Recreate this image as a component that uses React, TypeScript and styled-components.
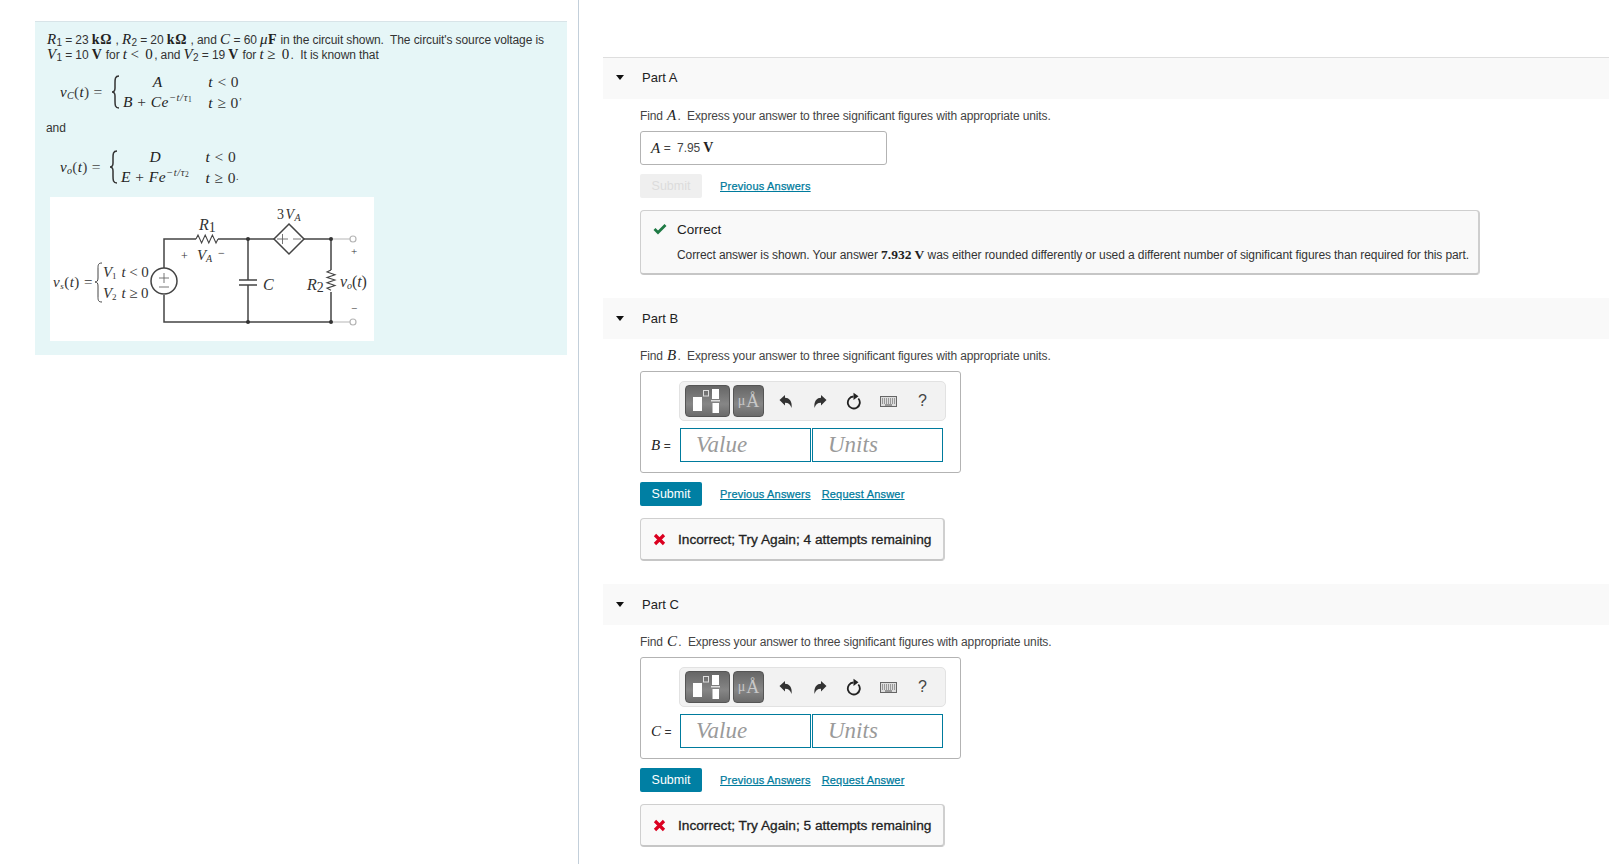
import styled, { createGlobalStyle } from 'styled-components';

const GlobalStyle = createGlobalStyle`
  html, body {
    margin: 0;
    padding: 0;
    background: #fff;
    overflow: hidden;
  }
  body {
    font-family: "Liberation Sans", Arial, sans-serif;
    font-size: 12px;
    letter-spacing: -0.1px;
    color: #333;
  }
`;

const Page = styled.div`
  display: flex;
  width: 1609px;
  height: 864px;
  overflow: hidden;
`;

const LeftColumn = styled.div`
  width: 579px;
  height: 864px;
  flex-shrink: 0;
  box-sizing: border-box;
  border-right: 1px solid #c3cfda;
  padding: 21px 0 0 35px;
`;

const RightColumn = styled.div`
  flex: 1;
  padding: 57px 0 0 24px;
`;

const Statement = styled.div`
  width: 532px;
  height: 334px;
  box-sizing: border-box;
  background: #e6f6f7;
  border-top: 1px solid #d8e4e8;
  padding: 10px 12px 0 12px;
  line-height: 14.5px;
`;

const Paragraph = styled.div`
  height: 14.5px;
  white-space: pre;
`;

const M = styled.span`
  font-family: "Liberation Serif", "DejaVu Serif", serif;
  font-style: italic;
  font-size: 15px;
  letter-spacing: 0.3px;
  color: #222;
`;

const Mn = styled(M)`
  font-style: normal;
  letter-spacing: 1.3px;
`;

const Mr = styled(M)`
  font-style: normal;
  font-weight: 700;
  font-size: 14px;
  letter-spacing: 0.8px;
`;

const NoteMath = styled(Mr)`
  font-size: 13.5px;
  letter-spacing: 0;
`;

const Sub = styled.sub`
  font-size: 10px;
  line-height: 0;
  vertical-align: -2px;
`;

const SubMath = styled(M)`
  font-size: 10px;
`;

const Equation = styled.div<{ $top: number; $left: number }>`
  display: flex;
  align-items: center;
  margin: ${({ $top }) => $top}px 0 0 ${({ $left }) => $left}px;
  height: 44px;
`;

const EqLabel = styled.div<{ $width: number }>`
  font-family: "Liberation Serif", serif;
  font-size: 15.5px;
  letter-spacing: 0.3px;
  color: #444;
  white-space: pre;
  width: ${({ $width }) => $width}px;
`;

const Cases = styled.div`
  display: grid;
  grid-template-columns: auto auto;
  grid-auto-rows: 20.5px;
  column-gap: 16px;
  margin-left: 3px;
  font-family: "Liberation Serif", serif;
  font-size: 15.5px;
  letter-spacing: 0.4px;
  line-height: 20.5px;
  color: #333;

  ${M} {
    font-size: 15.5px;
    letter-spacing: 0.5px;
  }
`;

const CaseValue = styled.div`
  text-align: center;
  white-space: pre;
`;

const CaseCond = styled.div`
  white-space: pre;
`;

const Sup = styled.sup`
  font-size: 10.5px;
  line-height: 0;
  vertical-align: 6px;
  font-style: italic;
  letter-spacing: 0.6px;

  sub {
    font-size: 7.5px;
    font-style: normal;
    line-height: 0;
    vertical-align: -1px;
  }
`;

const Dot = styled.span`
  font-size: 10px;
  vertical-align: 3px;
`;

const AndLine = styled.div`
  margin-top: 7px;
  line-height: 14px;
  margin-left: -1px;
`;

const CircuitFrame = styled.div`
  width: 324px;
  height: 144px;
  margin: 8px 0 0 3px;
  background: #fff;
`;

const PartHeader = styled.div<{ $first?: boolean }>`
  display: flex;
  align-items: center;
  box-sizing: border-box;
  height: ${({ $first }) => ($first ? 42 : 41)}px;
  padding-bottom: ${({ $first }) => ($first ? 2 : 0)}px;
  background: #f9f9f9;
  border-top: ${({ $first }) => ($first ? '1px solid #dedede' : 'none')};
  color: #222;
  font-size: 13px;
  letter-spacing: 0;
`;

const Caret = styled.span`
  width: 0;
  height: 0;
  margin: 0 18px 0 13px;
  border-left: 4.5px solid transparent;
  border-right: 4.5px solid transparent;
  border-top: 5px solid #111;
`;

const PartBody = styled.div`
  padding: 9px 0 23px 37px;
`;

const Prompt = styled.div`
  height: 14px;
  line-height: 14px;
  margin-bottom: 9px;
  color: #444;
  letter-spacing: -0.13px;
  white-space: pre;

  ${M} {
    margin: 0 1px;
  }
`;

const AnswerBox = styled.div`
  display: flex;
  align-items: center;
  width: 247px;
  height: 34px;
  box-sizing: border-box;
  border: 1px solid #b3b3b3;
  border-radius: 3px;
  padding-left: 10px;
  color: #444;
  white-space: pre;
`;

const Actions = styled.div<{ $top: number }>`
  display: flex;
  align-items: center;
  margin-top: ${({ $top }) => $top}px;
`;

const SubmitButton = styled.div<{ $disabled?: boolean }>`
  display: flex;
  align-items: center;
  justify-content: center;
  width: 62px;
  height: 24px;
  padding-bottom: 1px;
  box-sizing: border-box;
  border-radius: 2px;
  background: ${({ $disabled }) => ($disabled ? '#efefef' : '#007fa3')};
  color: ${({ $disabled }) => ($disabled ? '#dcdcdc' : '#fff')};
  font-size: 12.5px;
  letter-spacing: 0;
`;

const ActionLink = styled.a`
  margin-left: 18px;
  color: #007b9d;
  font-size: 11px;
  letter-spacing: 0.2px;
  text-decoration: underline;
  -webkit-text-stroke: 0.25px #007b9d;

  & + & {
    margin-left: 11px;
  }
`;

const Feedback = styled.div<{ $wide?: boolean }>`
  margin-top: 12px;
  box-sizing: border-box;
  width: ${({ $wide }) => ($wide ? 840 : 305)}px;
  height: ${({ $wide }) => ($wide ? 65 : 43)}px;
  border: 1px solid #cfcfcf;
  border-bottom: 2px solid #c6c6c6;
  border-right: 2px solid #cfcfcf;
  border-radius: 4px;
  background: #f9f9f9;
  padding-left: 12px;
`;

const FeedbackRow = styled.div<{ $height: number }>`
  display: flex;
  align-items: center;
  height: ${({ $height }) => $height}px;
  color: #222;
`;

const FeedbackTitle = styled.span<{ $strong?: boolean }>`
  margin-left: ${({ $strong }) => ($strong ? 12 : 10)}px;
  font-size: ${({ $strong }) => ($strong ? 13.7 : 13.5)}px;
  letter-spacing: 0;
  -webkit-text-stroke: ${({ $strong }) => ($strong ? '0.3px #222' : '0')};
`;

const FeedbackNote = styled.div`
  margin-left: 24px;
  color: #333;
  letter-spacing: -0.09px;
  white-space: pre;
`;

const EntryBox = styled.div`
  width: 321px;
  height: 102px;
  box-sizing: border-box;
  border: 1px solid #b3b3b3;
  border-radius: 3px;
  padding: 9px 0 0 38px;
`;

const Toolbar = styled.div`
  display: flex;
  align-items: center;
  width: 267px;
  height: 40px;
  box-sizing: border-box;
  border: 1px solid #e2e2e2;
  border-radius: 5px;
  background: #f2f2f2;
  padding-left: 5px;
`;

const ToolGroup = styled.div<{ $width: number; $gap: number }>`
  display: flex;
  align-items: center;
  justify-content: center;
  width: ${({ $width }) => $width}px;
  height: 32px;
  box-sizing: border-box;
  margin-right: ${({ $gap }) => $gap}px;
  border: 1px solid #555;
  border-radius: 4px;
  background: linear-gradient(#666, #868686 60%, #6b6b6b);
  color: #c8c8c8;
  font-family: "Liberation Serif", serif;
  font-size: 14px;
`;

const Angstrom = styled.span`
  font-size: 18px;
  line-height: 20px;
  margin-left: 1px;
`;

const ToolIcon = styled.span<{ $width: number }>`
  display: flex;
  align-items: center;
  justify-content: center;
  width: ${({ $width }) => $width}px;
  color: #444;
  font-size: 16px;
`;

const EntryRow = styled.div`
  display: flex;
  align-items: center;
  margin: 7px 0 0 -28px;
`;

const EntryLabel = styled.div`
  width: 29px;
  white-space: pre;
  color: #333;
`;

const EntryInput = styled.div`
  display: flex;
  align-items: center;
  width: 131px;
  height: 34px;
  box-sizing: border-box;
  margin-right: 1px;
  padding-left: 15px;
  border: 1px solid #007b9d;
  font-family: "Liberation Serif", serif;
  font-style: italic;
  font-size: 23px;
  letter-spacing: 0;
  color: #9a9a9a;
`;

const Brace = ({ height }: { height: number }) => (
  <svg width="9" height={height} viewBox={`0 0 9 ${height}`}>
    <path
      d={`M8 1 C4 1 4 4 4 8 L4 ${height / 2 - 4} C4 ${height / 2 - 1} 3 ${height / 2} 1 ${height / 2} C3 ${height / 2} 4 ${height / 2 + 1} 4 ${height / 2 + 4} L4 ${height - 8} C4 ${height - 4} 4 ${height - 1} 8 ${height - 1}`}
      fill="none"
      stroke="#333"
      strokeWidth="1.5"
    />
  </svg>
);

const Circuit = () => (
  <svg width="324" height="144" viewBox="0 0 324 144" fontFamily="Liberation Serif, serif" fill="#333">
    <g fill="none" stroke="#444" strokeWidth="1.5">
      <path d="M114 71 V42 H146 M168 42 H224 M254 42 H281 V73 M281 95 V125 H114 V98" />
      <path d="M146 42 l2 -4 l3.6 8 l3.6 -8 l3.6 8 l3.6 -8 l3.6 8 l2 -4" strokeWidth="1.1" />
      <path d="M281 73 l-4 2 l8 2.7 l-8 2.7 l8 2.7 l-8 2.7 l8 2.7 l-8 2.7 l4 2" strokeWidth="1.1" />
      <path d="M198 42 V83 M198 88 V125 M189 83 H207 M189 88 H207" />
      <path d="M239 27 L254 42 L239 57 L224 42 Z" />
      <circle cx="114" cy="84" r="13" />
    </g>
    <g fill="none" stroke="#b5b5b5" strokeWidth="1.2">
      <path d="M281 42 H300 M281 125 H300" />
      <circle cx="303" cy="42" r="3" />
      <circle cx="303" cy="125" r="3" />
    </g>
    <circle cx="198" cy="42" r="2" fill="#333" />
    <circle cx="198" cy="125" r="2" fill="#333" />
    <circle cx="281" cy="42" r="2" fill="#333" />
    <circle cx="281" cy="125" r="2" fill="#333" />
    <path d="M227 42 H238 M232.500 37 V47 M243 42 H251" stroke="#666" strokeWidth="0.9" fill="none" />
    <path d="M109 81 H119 M114 76 V86 M109 90 H119" stroke="#666" strokeWidth="0.9" fill="none" />
    <text x="149" y="33" fontSize="16" fontStyle="italic">R<tspan fontStyle="normal" fontSize="14" dy="2">1</tspan></text>
    <text x="131" y="63" fontSize="12">+</text>
    <text x="147" y="63" fontSize="15" fontStyle="italic">V<tspan fontSize="10" dy="2">A</tspan></text>
    <text x="168" y="60" fontSize="12">−</text>
    <text x="227" y="22" fontSize="14" letterSpacing="0.5">3<tspan fontStyle="italic" dx="1">V</tspan><tspan fontStyle="italic" fontSize="10" dy="2">A</tspan></text>
    <text x="213" y="93" fontSize="16" fontStyle="italic">C</text>
    <text x="257" y="93" fontSize="16" fontStyle="italic">R<tspan fontStyle="normal" fontSize="14" dy="2">2</tspan></text>
    <text x="290" y="90" fontSize="16" fontStyle="italic">v<tspan fontSize="10" dy="2">o</tspan><tspan fontStyle="normal" dy="-2">(</tspan>t<tspan fontStyle="normal">)</tspan></text>
    <text x="301" y="58" fontSize="11">+</text>
    <text x="301" y="115" fontSize="11">−</text>
    <text x="3" y="90" fontSize="15" fontStyle="italic" letterSpacing="0.5">v<tspan fontSize="9" dy="2">s</tspan><tspan fontStyle="normal" dy="-2">(</tspan>t<tspan fontStyle="normal">) =</tspan></text>
    <path d="M52 66 C48 66 48 68 48 72 V81 C48 84 47 85 45 85 C47 85 48 86 48 89 V99 C48 103 48 105 52 105" fill="none" stroke="#444" strokeWidth="1" />
    <text x="53" y="80" fontSize="15" fontStyle="italic">V<tspan fontStyle="normal" fontSize="9" dy="2">1</tspan><tspan dx="5" dy="-2">t</tspan><tspan fontStyle="normal"> &lt; 0</tspan></text>
    <text x="53" y="101" fontSize="15" fontStyle="italic">V<tspan fontStyle="normal" fontSize="9" dy="2">2</tspan><tspan dx="5" dy="-2">t</tspan><tspan fontStyle="normal"> ≥ 0</tspan></text>
  </svg>
);

const TemplateIcon = () => (
  <svg width="43" height="29" viewBox="0 0 43 29">
    <rect x="7" y="10" width="9" height="14" fill="#fff" />
    <rect x="17.500" y="3.500" width="5" height="5.500" fill="none" stroke="#ddd" strokeWidth="1" />
    <rect x="26" y="2" width="7" height="10" fill="#fff" />
    <rect x="25" y="13" width="9" height="1.500" fill="#ddd" />
    <rect x="26.500" y="16" width="6.500" height="10" fill="#fff" />
  </svg>
);

const UndoIcon = ({ flip }: { flip?: boolean }) => (
  <svg width="14" height="15" viewBox="0 0 14 15">
    <path
      d="M0.500 6 L6 1 V3.800 C10 3.800 13.500 7 12.500 14 C11.500 10.500 9.500 8.800 6 8.800 V11.500 Z"
      fill="#333"
      transform={flip ? 'matrix(-1 0 0 1 14 0)' : undefined}
    />
  </svg>
);

const ResetIcon = () => (
  <svg width="16" height="18" viewBox="0 0 16 18">
    <path d="M12.300 6.500 A6 6 0 1 1 7.500 4.500" fill="none" stroke="#222" strokeWidth="1.800" />
    <path d="M7.500 0.800 L7.500 8 L12.500 4.200 Z" fill="#222" />
  </svg>
);

const KeyboardIcon = () => (
  <svg width="17" height="11" viewBox="0 0 17 11">
    <rect x="0.500" y="0.500" width="16" height="10" fill="#ddd" stroke="#666" />
    <path d="M2 3 H15 M2 5 H15 M2 7 H15" stroke="#555" strokeWidth="1" strokeDasharray="1 1" />
    <path d="M5 9 H12" stroke="#555" />
  </svg>
);

const CheckIcon = () => (
  <svg width="14" height="12" viewBox="0 0 14 12">
    <path d="M1.500 6 L5 9.500 L12.500 2" fill="none" stroke="#1f7a45" strokeWidth="2.800" />
  </svg>
);

const CrossIcon = () => (
  <svg width="13" height="13" viewBox="0 0 13 13">
    <path d="M2 2 L11 11 M11 2 L2 11" fill="none" stroke="#db0020" strokeWidth="3.200" />
  </svg>
);

const EntryPanel = ({ name }: { name: string }) => (
  <EntryBox>
    <Toolbar>
      <ToolGroup $width={45} $gap={3}><TemplateIcon /></ToolGroup>
      <ToolGroup $width={31} $gap={5}>μ<Angstrom>Å</Angstrom></ToolGroup>
      <ToolIcon $width={33}><UndoIcon /></ToolIcon>
      <ToolIcon $width={35}><UndoIcon flip /></ToolIcon>
      <ToolIcon $width={33}><ResetIcon /></ToolIcon>
      <ToolIcon $width={36}><KeyboardIcon /></ToolIcon>
      <ToolIcon $width={33}>?</ToolIcon>
    </Toolbar>
    <EntryRow>
      <EntryLabel><M>{name}</M> = </EntryLabel>
      <EntryInput>Value</EntryInput>
      <EntryInput>Units</EntryInput>
    </EntryRow>
  </EntryBox>
);

const OpenPart = ({ part, name, attempts }: { part: string; name: string; attempts: number }) => (
  <>
    <PartHeader><Caret />{part}</PartHeader>
    <PartBody>
      <Prompt>Find <M>{name}</M>.  Express your answer to three significant figures with appropriate units.</Prompt>
      <EntryPanel name={name} />
      <Actions $top={9}>
        <SubmitButton>Submit</SubmitButton>
        <ActionLink>Previous Answers</ActionLink>
        <ActionLink>Request Answer</ActionLink>
      </Actions>
      <Feedback>
        <FeedbackRow $height={41}>
          <CrossIcon />
          <FeedbackTitle $strong>Incorrect; Try Again; {attempts} attempts remaining</FeedbackTitle>
        </FeedbackRow>
      </Feedback>
    </PartBody>
  </>
);

export default function App() {
  return (
    <Page>
      <GlobalStyle />
      <LeftColumn>
        <Statement>
          <Paragraph>
            <M>R</M><Sub>1</Sub> = 23 <Mr>kΩ</Mr> , <M>R</M><Sub>2</Sub> = 20 <Mr>kΩ</Mr> , and <M>C</M> = 60 <M>μ</M><Mr>F</Mr> in the circuit shown.  The circuit's source voltage is
          </Paragraph>
          <Paragraph>
            <M>V</M><Sub>1</Sub> = 10 <Mr>V</Mr> for <M>t</M> <Mn>&lt; 0</Mn>, and <M>V</M><Sub>2</Sub> = 19 <Mr>V</Mr> for <M>t</M> <Mn>≥ 0</Mn>.  It is known that
          </Paragraph>
          <Equation $top={9} $left={13}>
            <EqLabel $width={51}><M>v</M><Sub><SubMath>C</SubMath></Sub>(<M>t</M>) =</EqLabel>
            <Brace height={34} />
            <Cases>
              <CaseValue><M>A</M></CaseValue>
              <CaseCond><M>t</M> &lt; 0</CaseCond>
              <CaseValue><M>B</M> + <M>C</M><M>e</M><Sup>−t/τ<sub>1</sub></Sup></CaseValue>
              <CaseCond><M>t</M> ≥ 0<Dot>’</Dot></CaseCond>
            </Cases>
          </Equation>
          <AndLine>and</AndLine>
          <Equation $top={10} $left={13}>
            <EqLabel $width={49}><M>v</M><Sub><SubMath>o</SubMath></Sub>(<M>t</M>) =</EqLabel>
            <Brace height={34} />
            <Cases>
              <CaseValue><M>D</M></CaseValue>
              <CaseCond><M>t</M> &lt; 0</CaseCond>
              <CaseValue><M>E</M> + <M>F</M><M>e</M><Sup>−t/τ<sub>2</sub></Sup></CaseValue>
              <CaseCond><M>t</M> ≥ 0<Dot>.</Dot></CaseCond>
            </Cases>
          </Equation>
          <CircuitFrame><Circuit /></CircuitFrame>
        </Statement>
      </LeftColumn>
      <RightColumn>
        <PartHeader $first><Caret />Part A</PartHeader>
        <PartBody>
          <Prompt>Find <M>A</M>.  Express your answer to three significant figures with appropriate units.</Prompt>
          <AnswerBox><M>A</M> =  7.95 <Mr>V</Mr></AnswerBox>
          <Actions $top={9}>
            <SubmitButton $disabled>Submit</SubmitButton>
            <ActionLink>Previous Answers</ActionLink>
          </Actions>
          <Feedback $wide>
            <FeedbackRow $height={36}>
              <CheckIcon />
              <FeedbackTitle>Correct</FeedbackTitle>
            </FeedbackRow>
            <FeedbackNote>Correct answer is shown. Your answer <NoteMath>7.932 V</NoteMath> was either rounded differently or used a different number of significant figures than required for this part.</FeedbackNote>
          </Feedback>
        </PartBody>
        <OpenPart part="Part B" name="B" attempts={4} />
        <OpenPart part="Part C" name="C" attempts={5} />
      </RightColumn>
    </Page>
  );
}
